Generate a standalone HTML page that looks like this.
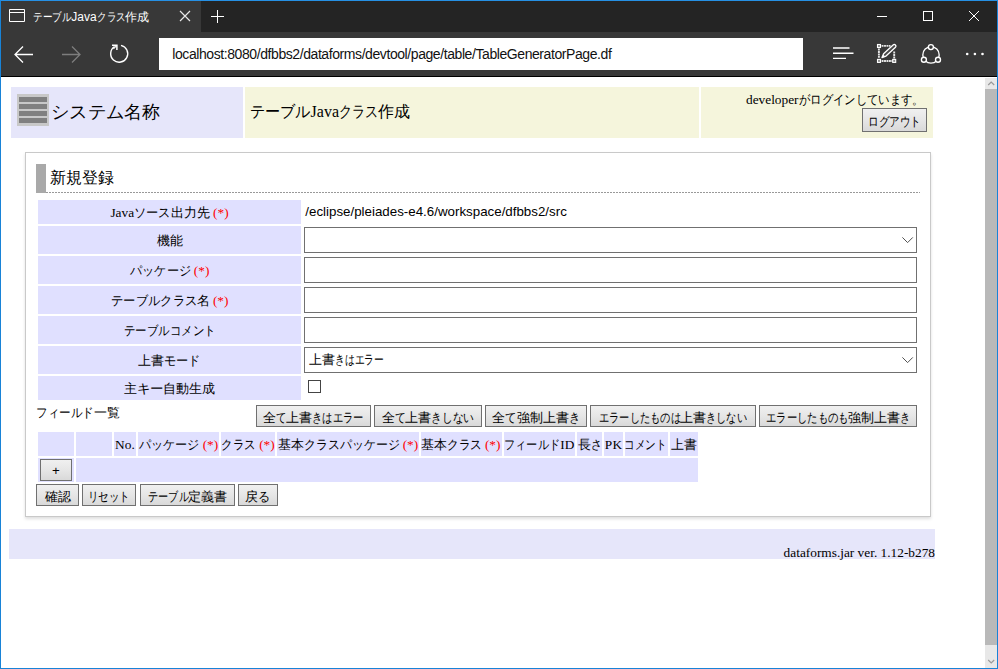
<!DOCTYPE html>
<html lang="ja">
<head>
<meta charset="utf-8">
<title>テーブルJavaクラス作成</title>
<style>
html,body{margin:0;padding:0;}
body{width:998px;height:669px;overflow:hidden;background:#fff;position:relative;
 font-family:"Liberation Serif",serif;font-size:13.33px;color:#000;}
div,span,b{box-sizing:border-box;}
.a{position:absolute;white-space:nowrap;}
.sans{font-family:"Liberation Sans",sans-serif;}
.lav{background:#e6e6fa;}
.bei{background:#f5f5dc;}
.lab{background:#e0e0ff;left:38px;width:263px;text-align:center;}
.lab span.t{display:inline-block;}
.red{color:#ff0000;}
.inp{left:304px;width:613px;height:26px;border:1px solid #707070;background:#fff;}
.btn{height:22px;border:1px solid #707070;background:linear-gradient(#f0f0f0,#e6e6e6 50%,#d9d9d9);
 text-align:center;line-height:24px;font-size:13.33px;}
.k{display:inline-block;transform:scaleX(var(--f,1));transform-origin:0 50%;margin-right:calc(var(--n)*(var(--f,1) - 1)*1em);}
.w{position:relative;z-index:2;}
b{font-weight:normal;letter-spacing:0.2px;}
.th{background:#e0e0ff;top:432px;height:24px;line-height:26px;text-align:center;}
svg{position:absolute;overflow:visible;}
/*fit*/#tabtitle{--f:0.797}#sysname{--f:1.019}#ptitle{--f:0.891}#login{--f:0.873}#logout{--f:0.813}#l1{--f:0.941}#l3{--f:0.938}#l4{--f:0.947}#l5{--f:0.884}#l6{--f:0.938}#l7{--f:1.036}#sel{--f:0.755}#flist{--f:0.891}#b1{--f:0.794}#b2{--f:0.827}#b3{--f:0.872}#b4{--f:0.786}#b5{--f:0.796}#t4{--f:0.932}#t5{--f:0.887}#t6{--f:0.920}#t7{--f:0.899}#t8{--f:0.862}#t9{--f:0.845}#t11{--f:0.814}#c2{--f:0.807}#c3{--f:0.783}#c4{--f:0.926}/*endfit*/
</style>
</head>
<body>

<!-- ===== browser chrome ===== -->
<div class="a" style="left:0;top:0;width:998px;height:77px;background:#383838;"></div>
<div class="a" style="left:201px;top:1px;width:796px;height:31px;background:#242424;"></div>
<div class="a" style="left:0;top:76px;width:998px;height:1px;background:#000;"></div>

<!-- tab icon -->
<svg style="left:9px;top:9px" width="17" height="14" viewBox="0 0 17 14"><path d="M0.5 0.5H15.5V12.5H0.5Z M0.5 3.5H15.5" fill="none" stroke="#fff" stroke-width="1"/></svg>
<div class="a sans" id="tabtitle" style="left:33px;top:8.8px;font-size:12px;line-height:16px;color:#fff;"><span class="k" style="--n:4">テーブル</span>Java<span class="k" style="--n:3">クラス</span>作成</div>
<!-- tab close -->
<svg style="left:180px;top:11px" width="10" height="10" viewBox="0 0 10 10"><path d="M0 0L10 10M10 0L0 10" fill="none" stroke="#e8e8e8" stroke-width="1.2"/></svg>
<!-- new tab plus -->
<svg style="left:211px;top:10px" width="13" height="13" viewBox="0 0 13 13"><path d="M6.5 0V13M0 6.5H13" fill="none" stroke="#fff" stroke-width="1"/></svg>

<!-- window controls -->
<svg style="left:877px;top:16px" width="10" height="1" viewBox="0 0 10 1"><rect width="10" height="1" fill="#fff"/></svg>
<svg style="left:923px;top:11px" width="10" height="10" viewBox="0 0 10 10"><rect x="0.5" y="0.5" width="9" height="9" fill="none" stroke="#fff"/></svg>
<svg style="left:969px;top:11px" width="10" height="10" viewBox="0 0 10 10"><path d="M0 0L10 10M10 0L0 10" fill="none" stroke="#fff" stroke-width="1"/></svg>

<!-- nav buttons -->
<svg style="left:14px;top:46px" width="19" height="17" viewBox="0 0 19 17"><path d="M19 8.5H1.2M9 0.5L1 8.5L9 16.5" fill="none" stroke="#fff" stroke-width="1.3"/></svg>
<svg style="left:62px;top:46px" width="19" height="17" viewBox="0 0 19 17"><path d="M0 8.5H17.8M10 0.5L18 8.5L10 16.5" fill="none" stroke="#7d7d7d" stroke-width="1.3"/></svg>
<svg style="left:109px;top:44px" width="20" height="20" viewBox="0 0 20 20"><path d="M12 1.35A8.5 8.5 0 1 1 5.6 2.5" fill="none" stroke="#fff" stroke-width="1.4"/><path d="M3 1.3H7.9V5.9" fill="none" stroke="#fff" stroke-width="1.5"/><path d="M7.9 1.3L4.4 4.8" fill="none" stroke="#fff" stroke-width="1.2"/></svg>

<!-- address bar -->
<div class="a" style="left:159px;top:38px;width:644px;height:32px;background:#fff;"></div>
<div class="a sans" id="url" style="left:172.3px;top:46px;font-size:14px;line-height:17px;color:#111;letter-spacing:-0.42px;">localhost:8080/dfbbs2/dataforms/devtool/page/table/TableGeneratorPage.df</div>

<!-- hub -->
<svg style="left:833px;top:47px" width="21" height="13" viewBox="0 0 21 13"><path d="M0 1H16.5M0 6.2H20.5M0 11.4H13" fill="none" stroke="#fff" stroke-width="1.4"/></svg>
<!-- web note -->
<svg style="left:877px;top:44px" width="20" height="19" viewBox="0 0 20 19">
 <path d="M4.6 1.9H13.5M1.9 4.6V14.6M4.6 17H15.6M17.2 7.6V14.6" fill="none" stroke="#e6e6e6" stroke-width="1.9" stroke-dasharray="1.9 0.55"/>
 <rect x="0.5" y="0.5" width="3" height="3" fill="#8a8a8a" stroke="#fff" stroke-width="1.1"/><rect x="0.5" y="15.4" width="3" height="3" fill="#8a8a8a" stroke="#fff" stroke-width="1.1"/><rect x="15.7" y="15.4" width="3" height="3" fill="#8a8a8a" stroke="#fff" stroke-width="1.1"/>
 <path d="M16.1 0.9L6.6 9.7L5 13.6L9 12.1L18.5 3.3A1.7 1.7 0 0 0 16.1 0.9Z" fill="#4a4a4a" stroke="#fff" stroke-width="1.3" stroke-linejoin="round"/>
 <path d="M5 13.6L6.3 10.4L8.2 12.4Z" fill="#fff"/>
</svg>
<!-- share -->
<svg style="left:921px;top:43px" width="21" height="21" viewBox="0 0 21 21">
 <circle cx="10" cy="11.9" r="8.2" fill="none" stroke="#fff" stroke-width="1.35"/>
 <circle cx="9.9" cy="4.1" r="2.5" fill="#383838" stroke="#fff" stroke-width="1.35"/>
 <circle cx="2.9" cy="16.7" r="2.5" fill="#383838" stroke="#fff" stroke-width="1.35"/>
 <circle cx="17" cy="16.7" r="2.5" fill="#383838" stroke="#fff" stroke-width="1.35"/>
</svg>
<!-- more -->
<svg style="left:965px;top:52px" width="20" height="4" viewBox="0 0 20 4"><circle cx="2.2" cy="2" r="1.3" fill="#fff"/><circle cx="9.9" cy="2" r="1.3" fill="#fff"/><circle cx="17.5" cy="2" r="1.3" fill="#fff"/></svg>

<!-- ===== page area ===== -->
<div class="a" style="left:1px;top:77px;width:984px;height:591px;background:#fff;"></div>

<!-- scrollbar -->
<div class="a" style="left:985px;top:78px;width:12px;height:590px;background:#e8e8e8;"></div>
<div class="a" style="left:985px;top:89px;width:12px;height:556px;background:#b9b9b9;"></div>
<svg style="left:988px;top:81px" width="7" height="5" viewBox="0 0 7 5"><path d="M0.2 4L3.2 1L6.2 4" fill="none" stroke="#999" stroke-width="1.2"/></svg>
<svg style="left:988px;top:659px" width="7" height="5" viewBox="0 0 7 5"><path d="M0.2 1L3.2 4L6.2 1" fill="none" stroke="#999" stroke-width="1.2"/></svg>

<!-- header -->
<div class="a lav" style="left:11px;top:87px;width:232px;height:51px;"></div>
<div class="a bei" style="left:245px;top:87px;width:454px;height:51px;"></div>
<div class="a bei" style="left:701px;top:87px;width:232px;height:51px;"></div>
<div class="a" style="left:17px;top:94px;width:32px;height:32px;background:#c8c8c8;"></div>
<div class="a" style="left:19px;top:97px;width:28px;height:5px;background:#808080;box-shadow:0 7px 0 #808080,0 14px 0 #808080,0 21px 0 #808080;"></div>
<div class="a" id="sysname" style="left:50.5px;top:100px;font-size:18px;line-height:24px;"><span class="k" style="--n:4">システム</span>名称</div>
<div class="a" id="ptitle" style="left:250px;top:101px;font-size:16px;line-height:22px;"><span class="k" style="--n:4;--f:0.946">テーブル</span>Java<span class="k" style="--n:3;--f:0.818">クラス</span>作成</div>
<div class="a" id="login" style="left:746px;top:91px;line-height:18px;">developer<span class="k" style="--n:11">がログインしています。</span></div>
<div class="a btn" id="logout" style="left:862px;top:108px;width:65px;height:24px;line-height:26px;"><span class="k" style="--n:5">ログアウト</span></div>

<!-- panel -->
<div class="a" style="left:25px;top:152px;width:906px;height:365px;border:1px solid #c9c9c9;background:#fff;box-shadow:0 2px 3px rgba(0,0,0,0.13);"></div>
<div class="a" style="left:36px;top:164px;width:10px;height:29px;background:#a9a9a9;"></div>
<div class="a" style="left:46px;top:192px;width:874px;height:1px;background:repeating-linear-gradient(90deg,#999 0 2px,#fff 2px 3px);"></div>
<div class="a" id="h1" style="left:49.5px;top:167px;font-size:16px;line-height:22px;">新規登録</div>

<!-- form rows -->
<div class="a lab" style="top:200px;height:24px;line-height:25px;"><span class="t" id="l1">Java<span class="k" style="--n:3">ソース</span>出力先 <span class="red">(*)</span></span></div>
<div class="a lab" style="top:226px;height:28px;line-height:29px;"><span class="t" id="l2">機能</span></div>
<div class="a lab" style="top:256px;height:28px;line-height:29px;"><span class="t" id="l3"><span class="k" style="--n:5">パッケージ</span> <span class="red">(*)</span></span></div>
<div class="a lab" style="top:286px;height:28px;line-height:29px;"><span class="t" id="l4"><span class="k" style="--n:7">テーブルクラス</span>名 <span class="red">(*)</span></span></div>
<div class="a lab" style="top:316px;height:28px;line-height:29px;"><span class="t" id="l5"><span class="k" style="--n:8">テーブルコメント</span></span></div>
<div class="a lab" style="top:346px;height:28px;line-height:29px;"><span class="t" id="l6">上書<span class="k" style="--n:3">モード</span></span></div>
<div class="a lab" style="top:376px;height:24px;line-height:25px;"><span class="t" id="l7">主<span class="k" style="--n:2">キー</span>自動生成</span></div>

<div class="a sans" id="v1" style="left:305.3px;top:203px;line-height:18px;">/eclipse/pleiades-e4.6/workspace/dfbbs2/src</div>
<div class="a inp" style="top:227px;"></div>
<div class="a inp" style="top:257px;"></div>
<div class="a inp" style="top:287px;"></div>
<div class="a inp" style="top:317px;"></div>
<div class="a inp" style="top:347px;"></div>
<div class="a sans" id="sel" style="left:309px;top:351px;line-height:18px;">上書<span class="k" style="--n:5">きはエラー</span></div>
<svg style="left:902px;top:237px" width="12" height="7" viewBox="0 0 12 7"><path d="M0.4 0.4L5.6 5.6L10.8 0.4" fill="none" stroke="#505050" stroke-width="1"/></svg>
<svg style="left:902px;top:357px" width="12" height="7" viewBox="0 0 12 7"><path d="M0.4 0.4L5.6 5.6L10.8 0.4" fill="none" stroke="#505050" stroke-width="1"/></svg>
<div class="a" style="left:308px;top:380px;width:13px;height:13px;border:1px solid #444;background:#fff;"></div>

<!-- field list -->
<div class="a" id="flist" style="left:36.3px;top:404px;line-height:18px;"><span class="k" style="--n:5">フィールド</span>一覧</div>
<div class="a btn" id="b1" style="left:256px;top:405px;width:115px;">全<span class="k" style="--n:1">て</span>上書<span class="k" style="--n:5">きはエラー</span></div>
<div class="a btn" id="b2" style="left:374px;top:405px;width:108px;">全<span class="k" style="--n:1">て</span>上書<span class="k" style="--n:4">きしない</span></div>
<div class="a btn" id="b3" style="left:485px;top:405px;width:102px;">全<span class="k" style="--n:1">て</span>強制上書<span class="k" style="--n:1">き</span></div>
<div class="a btn" id="b4" style="left:590px;top:405px;width:166px;"><span class="k" style="--n:8">エラーしたものは</span>上書<span class="k" style="--n:4">きしない</span></div>
<div class="a btn" id="b5" style="left:759px;top:405px;width:158px;"><span class="k" style="--n:8">エラーしたものも</span>強制上書<span class="k" style="--n:1">き</span></div>

<div class="a th" style="left:38px;width:36px;"></div>
<div class="a th" style="left:76px;width:36px;"></div>
<div class="a th" id="t3" style="left:114px;width:22px;"><span class="w"><b>No.</b></span></div>
<div class="a th" id="t4" style="left:138px;width:81px;"><span class="w"><span class="k" style="--n:5">パッケージ</span> <span class="red">(*)</span></span></div>
<div class="a th" id="t5" style="left:221px;width:54px;"><span class="w"><span class="k" style="--n:3">クラス</span> <span class="red">(*)</span></span></div>
<div class="a th" id="t6" style="left:277px;width:142px;"><span class="w">基本<span class="k" style="--n:8">クラスパッケージ</span> <span class="red">(*)</span></span></div>
<div class="a th" id="t7" style="left:421px;width:81px;"><span class="w" style="left:-1px">基本<span class="k" style="--n:3">クラス</span> <span class="red">(*)</span></span></div>
<div class="a th" id="t8" style="left:504px;width:71px;"><span class="w"><span class="k" style="--n:5">フィールド</span><b>ID</b></span></div>
<div class="a th" id="t9" style="left:577px;width:25px;"><span class="w">長<span class="k" style="--n:1">さ</span></span></div>
<div class="a th" id="t10" style="left:604px;width:19px;"><span class="w"><b>PK</b></span></div>
<div class="a th" id="t11" style="left:625px;width:43px;"><span class="w" style="left:-1px"><span class="k" style="--n:4">コメント</span></span></div>
<div class="a th" id="t12" style="left:670px;width:28px;"><span class="w">上書</span></div>

<div class="a" style="left:38px;top:458px;width:36px;height:24px;background:#e0e0ff;"></div>
<div class="a" style="left:76px;top:458px;width:622px;height:24px;background:#e0e0ff;"></div>
<div class="a btn sans" style="left:40px;top:459px;width:32px;line-height:21px;">+</div>

<div class="a btn" id="c1" style="left:36px;top:484px;width:43px;">確認</div>
<div class="a btn" id="c2" style="left:82px;top:484px;width:54px;"><span class="k" style="--n:4">リセット</span></div>
<div class="a btn" id="c3" style="left:140px;top:484px;width:95px;"><span class="k" style="--n:4">テーブル</span>定義書</div>
<div class="a btn" id="c4" style="left:238px;top:484px;width:40px;">戻<span class="k" style="--n:1">る</span></div>

<!-- footer -->
<div class="a lav" style="left:9px;top:529px;width:926px;height:30px;"></div>
<div class="a" id="foot" style="left:783px;top:544.6px;width:152px;text-align:right;line-height:16px;">dataforms.jar ver. 1.12-b278</div>

<!-- window border -->
<div class="a" style="left:0;top:0;width:998px;height:669px;border:1px solid #1883d7;border-top-color:#2690e4;pointer-events:none;"></div>
</body>
</html>
